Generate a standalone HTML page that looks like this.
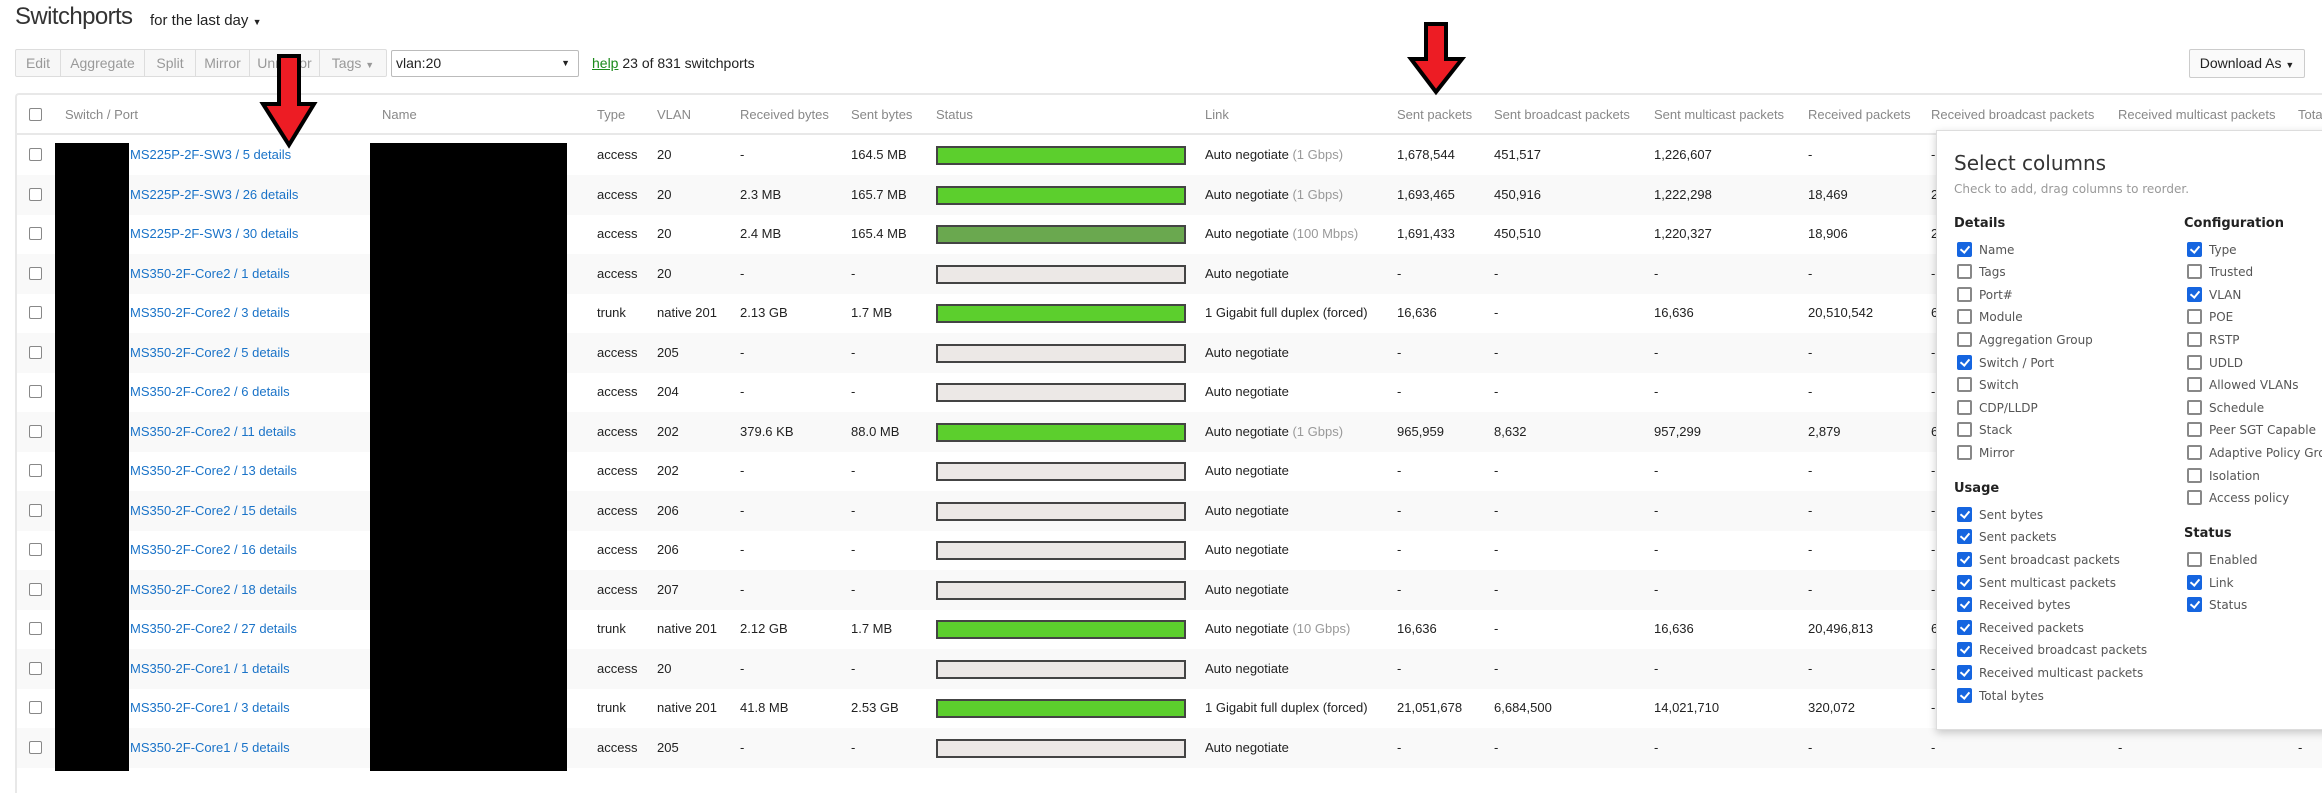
<!DOCTYPE html>
<html><head><meta charset="utf-8">
<style>
*{box-sizing:border-box;margin:0;padding:0}
body{width:2322px;height:771px;overflow:hidden;background:#fff;font-family:"Liberation Sans",Arial,sans-serif;font-size:13px;color:#222;position:relative}
.a{position:absolute;white-space:nowrap}
.title{left:15px;top:3px;font-size:24px;color:#333;letter-spacing:-0.6px}
.per{left:150px;top:12px;font-size:15px;color:#222}
.btns{left:15px;top:49px;height:28px;display:flex;border:1px solid #ddd;border-radius:2px;background:#f7f7f7}
.btns div{border-right:1px solid #ddd;color:#999;font-size:14px;line-height:26px;text-align:center}
.sel{left:391px;top:50px;width:188px;height:27px;border:1px solid #bbb;border-radius:2px;font-size:14px;line-height:25px;padding-left:4px}
.panel{left:15px;top:93px;width:2310px;height:700px;border-top:2px solid #e8e8e8;border-left:2px solid #e8e8e8;border-radius:4px 0 0 0}
.row{position:absolute;left:17px;width:2305px;height:40px}
.row>span{position:absolute;top:0;line-height:40px;white-space:nowrap}
.cb{position:absolute;left:12px;top:13px;width:13px;height:13px;border:1.5px solid #888;border-radius:2px;background:#fff}
.hd>span{color:#888}
.c1{left:113px}.c2{left:580px}.c3{left:640px}.c4{left:723px}.c5{left:834px}
.c7{left:1188px}.c8{left:1380px}.c9{left:1477px}.c10{left:1637px}.c11{left:1791px}.c12{left:1914px}.c13{left:2101px}.c14{left:2281px}
.lnk{color:#1a73c8}
.g{color:#999}
.bar{position:absolute;left:919px;top:11px;width:250px;height:19px;border:2px solid #444;background:#ece8e6}
.bar.on{background:#5ccf2d}.bar.dk{background:#6aa84f}
.alt{background:#f9f9f9}
.blk{background:#000}
.pop{left:1936px;top:130px;width:400px;height:600px;background:#fff;border:1px solid #ddd;box-shadow:0 3px 8px rgba(0,0,0,.2);font-family:"DejaVu Sans","Liberation Sans",sans-serif}
.pop .it{position:absolute;white-space:nowrap;font-size:12px;color:#555;line-height:16px}
.pop .it i{position:absolute;left:-22px;top:0px;width:15px;height:15px;border:2px solid #888;border-radius:2px}
.pop .it i.k{background:#1565e0;border-color:#1565e0}
.pop .it i.k:after{content:"";position:absolute;left:3px;top:0px;width:4px;height:7px;border:solid #fff;border-width:0 2px 2px 0;transform:rotate(40deg)}
.pop h4{position:absolute;font-size:13px;color:#222;font-weight:bold}
</style></head><body>
<div class="a title">Switchports</div>
<div class="a per">for the last day <span style="font-size:9px">▼</span></div>
<div class="a btns">
<div style="width:45px">Edit</div><div style="width:84px">Aggregate</div><div style="width:51px">Split</div><div style="width:54px">Mirror</div><div style="width:70px">Unmirror</div><div style="width:66px;border-right:none">Tags <span style="font-size:9px">▼</span></div>
</div>
<div class="a sel">vlan:20<span style="position:absolute;right:8px;font-size:9px">▼</span></div>
<div class="a" style="left:592px;top:55px;font-size:14px"><span style="color:#1a8a1a;text-decoration:underline">help</span> 23 of 831 switchports</div>
<div class="a" style="left:2189px;top:49px;width:116px;height:29px;border:1px solid #ccc;border-radius:2px;background:#fafafa;font-size:14px;line-height:27px;text-align:center">Download As <span style="font-size:9px">▼</span></div>

<div class="a panel"></div>
<div class="row hd" style="top:95px;border-bottom:2px solid #e8e8e8"><i class="cb"></i><span class="c1" style="left:48px">Switch / Port</span><span style="left:365px">Name</span><span class="c2">Type</span><span class="c3">VLAN</span><span class="c4">Received bytes</span><span class="c5">Sent bytes</span><span style="left:919px">Status</span><span class="c7">Link</span><span class="c8">Sent packets</span><span class="c9">Sent broadcast packets</span><span class="c10">Sent multicast packets</span><span class="c11">Received packets</span><span class="c12">Received broadcast packets</span><span class="c13">Received multicast packets</span><span class="c14">Total bytes</span></div>

<div class="row" style="top:135px"><i class="cb"></i><span class="c1 lnk">MS225P-2F-SW3 / 5 details</span><span class="c2">access</span><span class="c3">20</span><span class="c4">-</span><span class="c5">164.5 MB</span><i class="bar on"></i><span class="c7">Auto negotiate <span class="g">(1 Gbps)</span></span><span class="c8">1,678,544</span><span class="c9">451,517</span><span class="c10">1,226,607</span><span class="c11">-</span><span class="c12">-</span></div>
<div class="row alt" style="top:175px"><i class="cb"></i><span class="c1 lnk">MS225P-2F-SW3 / 26 details</span><span class="c2">access</span><span class="c3">20</span><span class="c4">2.3 MB</span><span class="c5">165.7 MB</span><i class="bar on"></i><span class="c7">Auto negotiate <span class="g">(1 Gbps)</span></span><span class="c8">1,693,465</span><span class="c9">450,916</span><span class="c10">1,222,298</span><span class="c11">18,469</span><span class="c12">2</span></div>
<div class="row" style="top:214px"><i class="cb"></i><span class="c1 lnk">MS225P-2F-SW3 / 30 details</span><span class="c2">access</span><span class="c3">20</span><span class="c4">2.4 MB</span><span class="c5">165.4 MB</span><i class="bar dk"></i><span class="c7">Auto negotiate <span class="g">(100 Mbps)</span></span><span class="c8">1,691,433</span><span class="c9">450,510</span><span class="c10">1,220,327</span><span class="c11">18,906</span><span class="c12">2</span></div>
<div class="row alt" style="top:254px"><i class="cb"></i><span class="c1 lnk">MS350-2F-Core2 / 1 details</span><span class="c2">access</span><span class="c3">20</span><span class="c4">-</span><span class="c5">-</span><i class="bar"></i><span class="c7">Auto negotiate</span><span class="c8">-</span><span class="c9">-</span><span class="c10">-</span><span class="c11">-</span><span class="c12">-</span></div>
<div class="row" style="top:293px"><i class="cb"></i><span class="c1 lnk">MS350-2F-Core2 / 3 details</span><span class="c2">trunk</span><span class="c3">native 201</span><span class="c4">2.13 GB</span><span class="c5">1.7 MB</span><i class="bar on"></i><span class="c7">1 Gigabit full duplex (forced)</span><span class="c8">16,636</span><span class="c9">-</span><span class="c10">16,636</span><span class="c11">20,510,542</span><span class="c12">6</span></div>
<div class="row alt" style="top:333px"><i class="cb"></i><span class="c1 lnk">MS350-2F-Core2 / 5 details</span><span class="c2">access</span><span class="c3">205</span><span class="c4">-</span><span class="c5">-</span><i class="bar"></i><span class="c7">Auto negotiate</span><span class="c8">-</span><span class="c9">-</span><span class="c10">-</span><span class="c11">-</span><span class="c12">-</span></div>
<div class="row" style="top:372px"><i class="cb"></i><span class="c1 lnk">MS350-2F-Core2 / 6 details</span><span class="c2">access</span><span class="c3">204</span><span class="c4">-</span><span class="c5">-</span><i class="bar"></i><span class="c7">Auto negotiate</span><span class="c8">-</span><span class="c9">-</span><span class="c10">-</span><span class="c11">-</span><span class="c12">-</span></div>
<div class="row alt" style="top:412px"><i class="cb"></i><span class="c1 lnk">MS350-2F-Core2 / 11 details</span><span class="c2">access</span><span class="c3">202</span><span class="c4">379.6 KB</span><span class="c5">88.0 MB</span><i class="bar on"></i><span class="c7">Auto negotiate <span class="g">(1 Gbps)</span></span><span class="c8">965,959</span><span class="c9">8,632</span><span class="c10">957,299</span><span class="c11">2,879</span><span class="c12">6</span></div>
<div class="row" style="top:451px"><i class="cb"></i><span class="c1 lnk">MS350-2F-Core2 / 13 details</span><span class="c2">access</span><span class="c3">202</span><span class="c4">-</span><span class="c5">-</span><i class="bar"></i><span class="c7">Auto negotiate</span><span class="c8">-</span><span class="c9">-</span><span class="c10">-</span><span class="c11">-</span><span class="c12">-</span></div>
<div class="row alt" style="top:491px"><i class="cb"></i><span class="c1 lnk">MS350-2F-Core2 / 15 details</span><span class="c2">access</span><span class="c3">206</span><span class="c4">-</span><span class="c5">-</span><i class="bar"></i><span class="c7">Auto negotiate</span><span class="c8">-</span><span class="c9">-</span><span class="c10">-</span><span class="c11">-</span><span class="c12">-</span></div>
<div class="row" style="top:530px"><i class="cb"></i><span class="c1 lnk">MS350-2F-Core2 / 16 details</span><span class="c2">access</span><span class="c3">206</span><span class="c4">-</span><span class="c5">-</span><i class="bar"></i><span class="c7">Auto negotiate</span><span class="c8">-</span><span class="c9">-</span><span class="c10">-</span><span class="c11">-</span><span class="c12">-</span></div>
<div class="row alt" style="top:570px"><i class="cb"></i><span class="c1 lnk">MS350-2F-Core2 / 18 details</span><span class="c2">access</span><span class="c3">207</span><span class="c4">-</span><span class="c5">-</span><i class="bar"></i><span class="c7">Auto negotiate</span><span class="c8">-</span><span class="c9">-</span><span class="c10">-</span><span class="c11">-</span><span class="c12">-</span></div>
<div class="row" style="top:609px"><i class="cb"></i><span class="c1 lnk">MS350-2F-Core2 / 27 details</span><span class="c2">trunk</span><span class="c3">native 201</span><span class="c4">2.12 GB</span><span class="c5">1.7 MB</span><i class="bar on"></i><span class="c7">Auto negotiate <span class="g">(10 Gbps)</span></span><span class="c8">16,636</span><span class="c9">-</span><span class="c10">16,636</span><span class="c11">20,496,813</span><span class="c12">6</span></div>
<div class="row alt" style="top:649px"><i class="cb"></i><span class="c1 lnk">MS350-2F-Core1 / 1 details</span><span class="c2">access</span><span class="c3">20</span><span class="c4">-</span><span class="c5">-</span><i class="bar"></i><span class="c7">Auto negotiate</span><span class="c8">-</span><span class="c9">-</span><span class="c10">-</span><span class="c11">-</span><span class="c12">-</span></div>
<div class="row" style="top:688px"><i class="cb"></i><span class="c1 lnk">MS350-2F-Core1 / 3 details</span><span class="c2">trunk</span><span class="c3">native 201</span><span class="c4">41.8 MB</span><span class="c5">2.53 GB</span><i class="bar on"></i><span class="c7">1 Gigabit full duplex (forced)</span><span class="c8">21,051,678</span><span class="c9">6,684,500</span><span class="c10">14,021,710</span><span class="c11">320,072</span><span class="c12">-</span></div>
<div class="row alt" style="top:728px"><i class="cb"></i><span class="c1 lnk">MS350-2F-Core1 / 5 details</span><span class="c2">access</span><span class="c3">205</span><span class="c4">-</span><span class="c5">-</span><i class="bar"></i><span class="c7">Auto negotiate</span><span class="c8">-</span><span class="c9">-</span><span class="c10">-</span><span class="c11">-</span><span class="c12">-</span><span class="c13">-</span><span class="c14">-</span></div>

<div class="a blk" style="left:55px;top:143px;width:74px;height:628px"></div>
<div class="a blk" style="left:370px;top:143px;width:197px;height:628px"></div>

<svg class="a" style="left:0;top:0" width="2322" height="771">
<polygon points="279,56 299,56 299,104 314,104 289,145 263,104 279,104" fill="#ed1c24" stroke="#000" stroke-width="4"/>
<polygon points="1426,24 1446,24 1446,59 1462,59 1436,92 1411,59 1426,59" fill="#ed1c24" stroke="#000" stroke-width="4"/>
</svg>

<div class="a pop">
<div class="a" style="left:17px;top:20px;font-size:20px;color:#333">Select columns</div>
<div class="a" style="left:17px;top:51px;font-size:12px;color:#999">Check to add, drag columns to reorder.</div>
<h4 style="left:17px;top:85px">Details</h4>
<div class="it" style="left:42px;top:111px"><i class="k"></i>Name</div>
<div class="it" style="left:42px;top:133px"><i></i>Tags</div>
<div class="it" style="left:42px;top:156px"><i></i>Port#</div>
<div class="it" style="left:42px;top:178px"><i></i>Module</div>
<div class="it" style="left:42px;top:201px"><i></i>Aggregation Group</div>
<div class="it" style="left:42px;top:224px"><i class="k"></i>Switch / Port</div>
<div class="it" style="left:42px;top:246px"><i></i>Switch</div>
<div class="it" style="left:42px;top:269px"><i></i>CDP/LLDP</div>
<div class="it" style="left:42px;top:291px"><i></i>Stack</div>
<div class="it" style="left:42px;top:314px"><i></i>Mirror</div>
<h4 style="left:17px;top:350px">Usage</h4>
<div class="it" style="left:42px;top:376px"><i class="k"></i>Sent bytes</div>
<div class="it" style="left:42px;top:398px"><i class="k"></i>Sent packets</div>
<div class="it" style="left:42px;top:421px"><i class="k"></i>Sent broadcast packets</div>
<div class="it" style="left:42px;top:444px"><i class="k"></i>Sent multicast packets</div>
<div class="it" style="left:42px;top:466px"><i class="k"></i>Received bytes</div>
<div class="it" style="left:42px;top:489px"><i class="k"></i>Received packets</div>
<div class="it" style="left:42px;top:511px"><i class="k"></i>Received broadcast packets</div>
<div class="it" style="left:42px;top:534px"><i class="k"></i>Received multicast packets</div>
<div class="it" style="left:42px;top:557px"><i class="k"></i>Total bytes</div>
<h4 style="left:247px;top:85px">Configuration</h4>
<div class="it" style="left:272px;top:111px"><i class="k"></i>Type</div>
<div class="it" style="left:272px;top:133px"><i></i>Trusted</div>
<div class="it" style="left:272px;top:156px"><i class="k"></i>VLAN</div>
<div class="it" style="left:272px;top:178px"><i></i>POE</div>
<div class="it" style="left:272px;top:201px"><i></i>RSTP</div>
<div class="it" style="left:272px;top:224px"><i></i>UDLD</div>
<div class="it" style="left:272px;top:246px"><i></i>Allowed VLANs</div>
<div class="it" style="left:272px;top:269px"><i></i>Schedule</div>
<div class="it" style="left:272px;top:291px"><i></i>Peer SGT Capable</div>
<div class="it" style="left:272px;top:314px"><i></i>Adaptive Policy Group</div>
<div class="it" style="left:272px;top:337px"><i></i>Isolation</div>
<div class="it" style="left:272px;top:359px"><i></i>Access policy</div>
<h4 style="left:247px;top:395px">Status</h4>
<div class="it" style="left:272px;top:421px"><i></i>Enabled</div>
<div class="it" style="left:272px;top:444px"><i class="k"></i>Link</div>
<div class="it" style="left:272px;top:466px"><i class="k"></i>Status</div>
</div>
</body></html>
